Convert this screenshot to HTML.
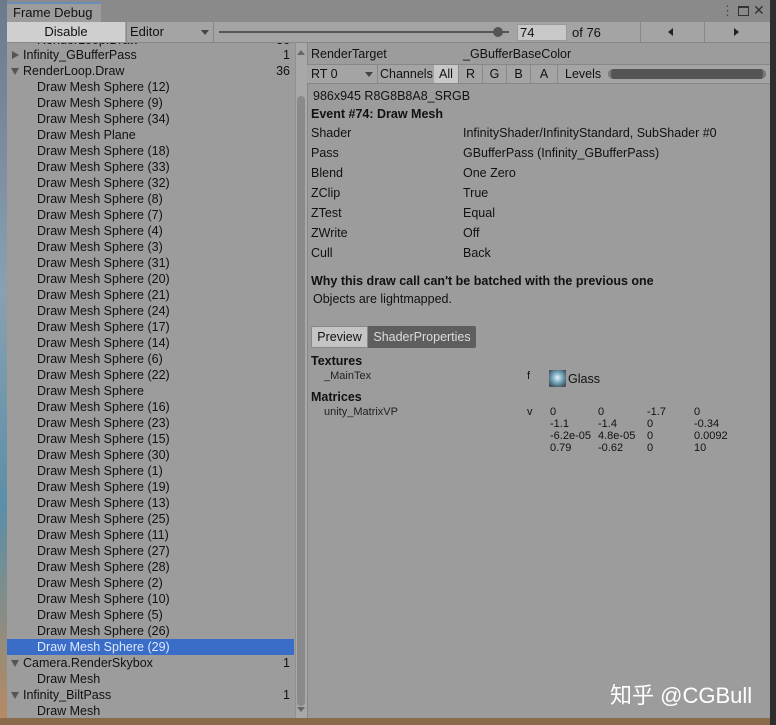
<!DOCTYPE html><html><head><style>
*{margin:0;padding:0;box-sizing:border-box}
body{width:776px;height:725px;overflow:hidden;background:#3a3a3a;font-family:"Liberation Sans",sans-serif;font-size:12px;color:#111;position:relative}
.a{position:absolute;white-space:nowrap}
.r{position:absolute;left:0;width:287px;height:16px;line-height:16px}
.r span.n{position:absolute;right:4px}
.tri{display:inline-block;width:0;height:0;border-left:4px solid transparent;border-right:4px solid transparent;border-top:7px solid #555;margin:0 4px 0 4px;vertical-align:0}
.trr{display:inline-block;width:0;height:0;border-top:4px solid transparent;border-bottom:4px solid transparent;border-left:7px solid #555;margin:0 4px 0 5px;vertical-align:0}
.p{position:absolute;left:304px;white-space:nowrap}
.v{position:absolute;left:463px;white-space:nowrap}
.b{font-weight:bold}
</style></head><body>
<div class="a" style="left:0;top:0;width:8px;height:725px;background:linear-gradient(#6a7a8a,#8aa0b0 40%,#5a8fa8 70%,#b98a60)"></div>
<div class="a" style="left:0;top:718px;width:776px;height:7px;background:#8a6a48"></div>
<div class="a" style="left:770px;top:0;width:6px;height:725px;background:#2e2e2e"></div>
<div class="a" style="left:7px;top:0;width:763px;height:718px;background:#9c9c9c"></div>
<div class="a" style="left:7px;top:0;width:763px;height:22px;background:#8a8a8a"></div>
<div class="a" style="left:7px;top:2px;width:94px;height:20px;background:#9c9c9c;border-top:2px solid #6a8cb8;padding:1px 0 0 6px;font-size:13px">Frame Debug</div>
<div class="a" style="left:721px;top:3px;font-size:13px;color:#444">⋮</div>
<div class="a" style="left:738px;top:6px;width:11px;height:10px;border:1px solid #333;border-top-width:2px"></div>
<div class="a" style="left:753px;top:2px;font-size:14px;color:#333">✕</div>
<div class="a" style="left:7px;top:22px;width:763px;height:21px;background:#a4a4a4;border-bottom:1px solid #888"></div>
<div class="a" style="left:7px;top:22px;width:118px;height:20px;background:#cfcfcf;text-align:center;line-height:20px;font-size:13px">Disable</div>
<div class="a" style="left:126px;top:22px;width:88px;height:20px;background:#a4a4a4;border-left:1px solid #888;border-right:1px solid #888;padding-left:3px;line-height:20px;font-size:13px">Editor<span style="position:absolute;right:4px;top:8px;border-left:4px solid transparent;border-right:4px solid transparent;border-top:5px solid #444"></span></div>
<div class="a" style="left:219px;top:31px;width:290px;height:2px;background:#555"></div>
<div class="a" style="left:493px;top:27px;width:10px;height:10px;border-radius:50%;background:#555"></div>
<div class="a" style="left:517px;top:24px;width:50px;height:17px;background:#c8c8c8;border:1px solid #999;padding-left:2px;line-height:15px;font-size:13px">74</div>
<div class="a" style="left:572px;top:25px;font-size:13px">of 76</div>
<div class="a" style="left:640px;top:22px;width:130px;height:21px;border-left:1px solid #888"></div>
<div class="a" style="left:704px;top:22px;width:1px;height:21px;background:#888"></div>
<div class="a" style="left:668px;top:28px;border-top:4px solid transparent;border-bottom:4px solid transparent;border-right:5px solid #222"></div>
<div class="a" style="left:734px;top:28px;border-top:4px solid transparent;border-bottom:4px solid transparent;border-left:5px solid #222"></div>
<div class="a" style="left:7px;top:43px;width:288px;height:675px;overflow:hidden;font-size:12.5px">
<div class="r" style="top:-11px;padding-left:30px">RenderLoop.Draw<span class="n">36</span></div>
<div class="r" style="top:4px"><span class="trr"></span>Infinity_GBufferPass<span class="n">1</span></div>
<div class="r" style="top:20px"><span class="tri"></span>RenderLoop.Draw<span class="n">36</span></div>
<div id="items"></div>
</div>
<div class="a" style="left:295px;top:43px;width:12px;height:675px;background:#a8a8a8;border-left:1px solid #909090"></div>
<div class="a" style="left:297px;top:96px;width:8px;height:610px;background:#8a8a8a;border-radius:4px"></div>
<div class="a" style="left:297px;top:50px;border-left:4px solid transparent;border-right:4px solid transparent;border-bottom:5px solid #666"></div>
<div class="a" style="left:297px;top:707px;border-left:4px solid transparent;border-right:4px solid transparent;border-top:5px solid #666"></div>
<div class="a" style="left:307px;top:43px;width:463px;height:675px;border-left:1px solid #888"></div>
<div class="p" style="left:311px;top:47px;font-size:12.5px">RenderTarget</div>
<div class="v" style="top:47px;font-size:12.5px">_GBufferBaseColor</div>
<div class="a" style="left:307px;top:64px;width:463px;height:20px;background:#a4a4a4;border-top:1px solid #888;border-bottom:1px solid #888"></div>
<div class="a" style="left:311px;top:67px;font-size:12.5px">RT 0</div>
<div class="a" style="left:365px;top:72px;border-left:4px solid transparent;border-right:4px solid transparent;border-top:5px solid #444"></div>
<div class="a" style="left:377px;top:64px;width:1px;height:20px;background:#888"></div>
<div class="a" style="left:380px;top:67px;font-size:12.5px">Channels</div>
<div class="a" style="left:434px;top:65px;width:24px;height:18px;background:#c8c8c8;text-align:center;line-height:18px;font-size:12.5px">All</div>
<div class="a" style="left:458px;top:64px;width:24px;height:20px;border-left:1px solid #888;text-align:center;line-height:20px;font-size:12.5px">R</div>
<div class="a" style="left:482px;top:64px;width:24px;height:20px;border-left:1px solid #888;text-align:center;line-height:20px;font-size:12.5px">G</div>
<div class="a" style="left:506px;top:64px;width:24px;height:20px;border-left:1px solid #888;text-align:center;line-height:20px;font-size:12.5px">B</div>
<div class="a" style="left:530px;top:64px;width:28px;height:20px;border-left:1px solid #888;border-right:1px solid #888;text-align:center;line-height:20px;font-size:12.5px">A</div>
<div class="a" style="left:565px;top:67px;font-size:12.5px">Levels</div>
<div class="a" style="left:608px;top:69px;width:158px;height:10px;background:#555;border-radius:5px;border-left:3px solid #777;border-right:3px solid #777"></div>
<div class="p" style="left:313px;top:89px;font-size:12.5px">986x945 R8G8B8A8_SRGB</div>
<div class="p b" style="left:311px;top:107px;font-size:12.5px">Event #74: Draw Mesh</div>
<div class="p" style="left:311px;top:126px;font-size:12.5px">Shader</div><div class="v" style="top:126px;font-size:12.5px">InfinityShader/InfinityStandard, SubShader #0</div>
<div class="p" style="left:311px;top:146px;font-size:12.5px">Pass</div><div class="v" style="top:146px;font-size:12.5px">GBufferPass (Infinity_GBufferPass)</div>
<div class="p" style="left:311px;top:166px;font-size:12.5px">Blend</div><div class="v" style="top:166px;font-size:12.5px">One Zero</div>
<div class="p" style="left:311px;top:186px;font-size:12.5px">ZClip</div><div class="v" style="top:186px;font-size:12.5px">True</div>
<div class="p" style="left:311px;top:206px;font-size:12.5px">ZTest</div><div class="v" style="top:206px;font-size:12.5px">Equal</div>
<div class="p" style="left:311px;top:226px;font-size:12.5px">ZWrite</div><div class="v" style="top:226px;font-size:12.5px">Off</div>
<div class="p" style="left:311px;top:246px;font-size:12.5px">Cull</div><div class="v" style="top:246px;font-size:12.5px">Back</div>
<div class="p b" style="left:311px;top:274px;font-size:12.5px">Why this draw call can't be batched with the previous one</div>
<div class="p" style="left:313px;top:292px;font-size:12.5px">Objects are lightmapped.</div>
<div class="a" style="left:311px;top:326px;width:57px;height:22px;background:#c4c4c4;border:1px solid #888;border-radius:2px 0 0 2px;text-align:center;line-height:20px;font-size:12.5px">Preview</div>
<div class="a" style="left:368px;top:326px;width:108px;height:22px;background:#5e5e5e;color:#ddd;border-radius:0 2px 2px 0;text-align:center;line-height:22px;font-size:12.5px">ShaderProperties</div>
<div class="p b" style="left:311px;top:354px;font-size:12.5px">Textures</div>
<div class="p" style="left:324px;top:370px;font-size:11px;color:#222">_MainTex</div>
<div class="p" style="left:527px;top:370px;font-size:11px">f</div>
<div class="a" style="left:549px;top:370px;width:17px;height:17px;background:radial-gradient(circle at 50% 45%,#e8f0ff,#7ab 40%,#456 80%)"></div>
<div class="p" style="left:568px;top:372px;font-size:12.5px">Glass</div>
<div class="p b" style="left:311px;top:390px;font-size:12.5px">Matrices</div>
<div class="p" style="left:324px;top:406px;font-size:11px;color:#222">unity_MatrixVP</div>
<div class="p" style="left:527px;top:406px;font-size:11px">v</div>
<div class="a" style="left:550px;top:406px;font-size:11px;line-height:12px">0<br>-1.1<br>-6.2e-05<br>0.79</div>
<div class="a" style="left:598px;top:406px;font-size:11px;line-height:12px">0<br>-1.4<br>4.8e-05<br>-0.62</div>
<div class="a" style="left:647px;top:406px;font-size:11px;line-height:12px">-1.7<br>0<br>0<br>0</div>
<div class="a" style="left:694px;top:406px;font-size:11px;line-height:12px">0<br>-0.34<br>0.0092<br>10</div>
<div class="a" style="left:610px;top:678px;font-size:22px;color:#fff;font-family:'Liberation Sans','Noto Sans CJK SC',sans-serif">知乎 @CGBull</div>
<script>
var n=[12,9,34,'P',18,33,32,8,7,4,3,31,20,21,24,17,14,6,22,'S',16,23,15,30,1,19,13,25,11,27,28,2,10,5,26,29];
var h='';n.forEach(function(x,i){var t=x==='P'?'Draw Mesh Plane':x==='S'?'Draw Mesh Sphere':'Draw Mesh Sphere ('+x+')';var top=36+16*i;var sel=i==35;h+='<div class="r" style="top:'+top+'px;padding-left:30px;'+(sel?'background:#3a6dc8;color:#dde8ff;':'')+'">'+t+'</div>';});
var e=[['tri','Camera.RenderSkybox',1],[0,'Draw Mesh'],['tri','Infinity_BiltPass',1],[0,'Draw Mesh']];
e.forEach(function(x,i){var top=36+16*(36+i);if(x[0])h+='<div class="r" style="top:'+top+'px"><span class="tri"></span>'+x[1]+'<span class="n">'+x[2]+'</span></div>';else h+='<div class="r" style="top:'+top+'px;padding-left:30px">'+x[1]+'</div>';});
document.getElementById('items').innerHTML=h;
</script>
</body></html>
